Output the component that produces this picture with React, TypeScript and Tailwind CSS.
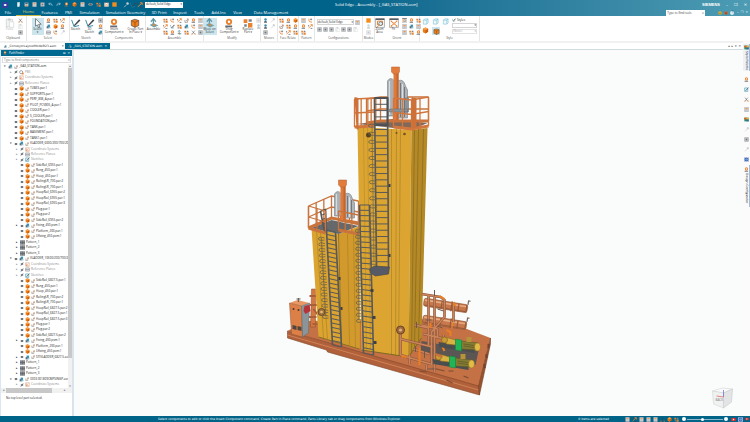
import React, { useState } from "react";

const ORANGE = "#e8822e";
const STEEL = "#41474f";
const TEAL = "#2f86a6";

type IconName =
  | "part" | "asm" | "eye" | "eyeOff" | "link" | "pattern" | "coord" | "plane" | "sketch" | "pmi"
  | "cursor" | "pencil" | "sheet" | "blocks" | "arrows" | "arc" | "scissors" | "fit" | "cube"
  | "cubeFull" | "zoom" | "gear" | "paste" | "undo" | "redo" | "save" | "corner" | "palette"
  | "globe" | "smile" | "frown" | "wrench" | "play" | "box" | "solid" | "move" | "person";

const glyphs: Record<IconName, React.ReactNode> = {
  part: (
    <>
      <path d="M8 1 14 4 14 11 8 15 2 12 2 4Z" fill="#ee7d18" />
      <path d="M8 7 14 4 14 11 8 15Z" fill="#c95f0b" />
      <path d="M8 1 14 4 8 7 2 4Z" fill="#f9a04a" />
    </>
  ),
  asm: (
    <>
      <path d="M5 2h8v8H5Z" fill="#3597b8" />
      <path d="M2 7h7v7H2Z" fill="#5c6e7a" />
      <path d="M8 9h6v5H8Z" fill="#8cc4d6" />
    </>
  ),
  eye: (
    <>
      <path d="M0 8Q8 -1 16 8Q8 17 0 8Z" fill="#a9aeb3" />
      <circle cx="8" cy="8" r="4" fill="#5a6066" />
    </>
  ),
  eyeOff: (
    <>
      <path d="M1 8Q8 0 15 8Q8 16 1 8Z" fill="#a4a9ae" />
      <circle cx="8" cy="8" r="3" fill="#666b70" />
      <path d="M3 15 13 1" stroke="#4a4f54" strokeWidth="2" />
    </>
  ),
  link: (
    <>
      <path d="M3 6v8h8V7" fill="none" stroke="#8a7d76" strokeWidth="2" />
      <path d="M6 10 13 3M9 3h5v5" fill="none" stroke="#ad7560" strokeWidth="2" />
    </>
  ),
  pattern: (
    <>
      <path d="M0 2h16v12H0Z" fill="#b7babd" />
      <path d="M0 3h16M0 8h16M0 13h16M3 2v12M8 2v12M13 2v12" stroke="#54595e" strokeWidth="2" />
    </>
  ),
  coord: (
    <>
      <path d="M2 2h12v12H2Z" fill="#fff" stroke="#d3a78b" strokeWidth="1.5" />
      <path d="M4 4v8h8M4 12 11 4" fill="none" stroke="#df6e31" strokeWidth="1.5" />
    </>
  ),
  plane: <path d="M2 3h12v10H2ZM2 8h12" fill="#eceef0" stroke="#868c92" strokeWidth="2" />,
  sketch: (
    <>
      <path d="M2 3h10v11H2Z" fill="#e9f5f8" stroke="#4aa5bd" strokeWidth="2" />
      <path d="M5 12 14 2" stroke="#505960" strokeWidth="2.5" />
    </>
  ),
  pmi: (
    <>
      <circle cx="7" cy="7" r="5" fill="#fff" stroke="#777" strokeWidth="2" />
      <path d="M9 9h6v5H9Z" fill={ORANGE} />
    </>
  ),
  cursor: <path d="M4 1 13 10H9L11 15 9 16 7 11 4 13Z" fill="#fff" stroke={STEEL} strokeWidth="1" />,
  pencil: (
    <>
      <path d="M1 3 5 14 13 12" fill="none" stroke={TEAL} strokeWidth="1.5" />
      <path d="M5 11 13 2 15 4 7 12 4 13Z" fill={STEEL} />
    </>
  ),
  sheet: (
    <>
      <path d="M2 1h12v14H2Z" fill="#eef0f1" stroke="#8a9096" strokeWidth="1.5" />
      <path d="M4 4h8v3H4Z" fill={ORANGE} />
      <path d="M4 9h8M4 12h8" stroke="#8a9096" strokeWidth="1.5" />
    </>
  ),
  blocks: (
    <>
      <path d="M1 2h6v6H1ZM8 8h7v7H8Z" fill={ORANGE} />
      <path d="M9 2h5v4H9ZM2 10h4v4H2Z" fill="#7b8187" />
    </>
  ),
  arrows: (
    <>
      <path d="M2 13 13 3M8 2h6v6" fill="none" stroke={ORANGE} strokeWidth="2.5" />
      <path d="M2 3v5M8 14h6" stroke={STEEL} strokeWidth="2" />
    </>
  ),
  arc: (
    <>
      <path d="M3 2v7Q4 14 13 13" fill="none" stroke={ORANGE} strokeWidth="2.5" />
      <path d="M7 2h6v5H7Z" fill="#868c92" />
    </>
  ),
  scissors: (
    <>
      <path d="M3 2 12 13M12 2 4 13" stroke={STEEL} strokeWidth="1.5" />
      <circle cx="3" cy="13" r="2" fill={ORANGE} />
      <circle cx="13" cy="13" r="2" fill={ORANGE} />
    </>
  ),
  fit: (
    <>
      <path d="M1 1h14v14H1Z" fill="#fff" stroke="#7c8288" strokeWidth="1" />
      <path d="M1 1h14v2H1Z" fill={STEEL} />
      <path d="M3 5 7 8M13 5 9 8M3 13 7 10M13 13 9 10M3 5h2M11 5h2M3 13h2M11 13h2" stroke={ORANGE} strokeWidth="1.6" />
      <path d="M6 7h4v4H6Z" fill="#f3a872" />
    </>
  ),
  cube: <path d="M3 5h8v9H3ZM3 5 6 2h8v9L11 14M11 5 14 2" fill="#eef8fb" stroke="#58aec7" strokeWidth="1" />,
  cubeFull: (
    <>
      <path d="M8 2 14 4V12L8 15 2 12V4Z" fill="#ed7f1c" stroke={STEEL} strokeWidth="1" />
      <path d="M2 4 8 7 14 4M8 7V15" fill="none" stroke="#8d4410" strokeWidth="1" />
    </>
  ),
  zoom: (
    <>
      <path d="M1 1h14v14H1Z" fill="#fff" stroke="#7c8288" strokeWidth="1" />
      <path d="M1 1h14v2H1Z" fill={STEEL} />
      <path d="M4 5h8v6H4Z" fill="none" stroke={ORANGE} strokeWidth="1.5" />
      <circle cx="9" cy="9" r="3" fill="#e6f1f5" stroke={STEEL} strokeWidth="1" />
      <path d="M7 11 3 15" stroke={ORANGE} strokeWidth="1.5" />
    </>
  ),
  gear: (
    <>
      <circle cx="8" cy="6" r="5" fill={ORANGE} />
      <circle cx="8" cy="6" r="2" fill="#fff" />
      <path d="M2 12h11v3H2Z" fill="#656b71" />
    </>
  ),
  paste: (
    <>
      <path d="M2 2h10v12H2Z" fill="#f2f3f3" stroke="#c4c7c9" strokeWidth="1" />
      <path d="M5 1h4v3H5Z" fill="#c4c7c9" />
      <path d="M7 6h7v9H7Z" fill="#fff" stroke="#cfd1d3" strokeWidth="1" />
    </>
  ),
  undo: <path d="M3 6h7Q14 7 13 12M6 2 2 6 6 10" fill="none" stroke="#cfe2ea" strokeWidth="2" />,
  redo: <path d="M13 6H6Q2 7 3 12M10 2 14 6 10 10" fill="none" stroke="#cfe2ea" strokeWidth="2" />,
  save: (
    <>
      <path d="M2 2h12v12H2Z" fill="#cbd7dd" />
      <path d="M4 2h8v5H4Z" fill="#52626b" />
      <path d="M5 10h6v4H5Z" fill={ORANGE} />
    </>
  ),
  corner: (
    <>
      <path d="M4 1h9l-2 14H4Z" fill="#f2f5f6" />
      <path d="M9 1 13 5H9Z" fill="#8ba6b2" />
    </>
  ),
  palette: (
    <>
      <path d="M1 2h14v12H1Z" fill="#2a9360" />
      <path d="M1 2h7v6H1Z" fill="#e85a2b" />
      <path d="M8 2h7v6H8Z" fill="#f3bb35" />
      <path d="M8 8h7v6H8Z" fill="#3569b4" />
    </>
  ),
  globe: (
    <>
      <path d="M0 1h16v14H0Z" fill="#a9b3e0" />
      <circle cx="8" cy="8" r="5.5" fill="#2a55ac" />
      <path d="M8 3Q12 7 8 13M3 8h10" fill="none" stroke="#9fd4ff" strokeWidth="1.5" />
    </>
  ),
  smile: (
    <>
      <circle cx="8" cy="8" r="7" fill="#efb429" />
      <path d="M4 9Q8 14 12 9M5 5v2M11 5v2" fill="none" stroke="#5b3e06" strokeWidth="1.5" />
    </>
  ),
  frown: (
    <>
      <circle cx="8" cy="8" r="7" fill="#d5602c" />
      <path d="M4 12Q8 7 12 12M5 5v2M11 5v2" fill="none" stroke="#571b06" strokeWidth="1.5" />
    </>
  ),
  wrench: <path d="M3 14 11 6M9 3 13 7 15 3 12 1Z" fill="#c6cacd" stroke="#c6cacd" strokeWidth="2" />,
  play: (
    <>
      <path d="M1 3h14v10H1Z" fill="#e32b2b" />
      <path d="M6 5 11 8 6 11Z" fill="#fff" />
    </>
  ),
  box: (
    <>
      <path d="M2 2h12v12H2Z" fill="#dedfe1" stroke="#7d8388" strokeWidth="1.5" />
      <path d="M5 5h6v6H5Z" fill="#6f767c" />
    </>
  ),
  solid: <path d="M1 1h14v14H1Z" fill="#f28c1c" />,
  move: (
    <>
      <path d="M7 1v9M3 6 7 1 11 6" fill="none" stroke="#5f97a7" strokeWidth="2" />
      <path d="M1 11 7 8 15 12 8 15Z" fill="#6aa7b8" />
      <circle cx="8" cy="11" r="2" fill={ORANGE} />
    </>
  ),
  person: (
    <>
      <circle cx="8" cy="5" r="4" fill="#3d8fae" />
      <path d="M3 15Q3 9 8 9T13 15Z" fill="#60676d" />
    </>
  ),
};

function Ico({ name, className = "size-[5px]" }: { name: IconName; className?: string }) {
  return (
    <svg viewBox="0 0 16 16" className={`shrink-0 ${className}`} aria-hidden="true">
      {glyphs[name]}
    </svg>
  );
}

/* ---------- title bar ---------- */

const quickAccess: IconName[] = ["corner", "save", "sheet", "box", "undo", "redo", "gear", "part", "sheet", "eye", "blocks", "fit", "solid"];
const menuTabs = [
  { label: "File", width: "w-[16px]" },
  { label: "Home", width: "w-[25px]" },
  { label: "Features", width: "w-[17px]" },
  { label: "PMI", width: "w-[21px]" },
  { label: "Simulation", width: "w-[21px]" },
  { label: "Simulation Geometry", width: "w-[51px]" },
  { label: "3D Print", width: "w-[16px]" },
  { label: "Inspect", width: "w-[26px]" },
  { label: "Tools", width: "w-[12px]" },
  { label: "Add-Ins", width: "w-[27px]" },
  { label: "View", width: "w-[11px]" },
  { label: "Data Management", width: "w-[46px]" },
];

function Header() {
  return (
    <header className="h-[16px] shrink-0 flex flex-col bg-linear-to-r from-[#00638a] from-45% to-[#4d9cb4] text-white">
      <div className="h-[9px] grid grid-cols-[1fr_80px_1fr] items-center">
        <div className="flex items-center pl-[2px]">
          <span className="flex size-[6px] items-center justify-center bg-[#3340a0] text-[4px] leading-none font-bold">▪</span>
          <div className="ml-[8px] flex items-center gap-[3px]">
            {quickAccess.map((name, i) => (
              <button key={i} aria-label={`Quick command ${i + 1}`} className="flex">
                <Ico name={name} />
              </button>
            ))}
          </div>
          <div className="ml-[6px] mr-[2px] flex items-center gap-[1px]">
            <Ico name="wrench" className="size-[6px]" />
            <Ico name="pencil" className="size-[6px]" />
            <Ico name="arrows" className="size-[6px]" />
          </div>
          <button className="flex h-[6px] w-[38px] items-center justify-between bg-white px-[1px] text-[3px] leading-none text-[#333]">
            default,Solid Edge <span>▾</span>
          </button>
        </div>
        <h1 className="text-center text-[4px] leading-none whitespace-nowrap">Solid Edge - Assembly - [_GAS_STATION.asm]</h1>
        <div className="flex items-center justify-end gap-[6px] pr-[3px] text-[4px] leading-none">
          <span className="font-['Liberation_Sans',sans-serif] font-bold">SIEMENS</span>
          <button aria-label="Minimize">–</button>
          <button aria-label="Restore">❐</button>
          <button aria-label="Close">✕</button>
        </div>
      </div>
      <div className="flex h-[7px] items-center justify-between">
        <nav className="flex items-center text-[4px] leading-none whitespace-nowrap">
          {menuTabs.map((tab) => (
            <button
              key={tab.label}
              className={`flex h-[7px] shrink-0 items-center justify-center ${tab.width} ${
                tab.label === "Home" ? "border-b border-[#c9b548] text-[#e6d35a]" : ""
              } ${tab.label === "Data Management" ? "ml-[5px]" : ""}`}
            >
              {tab.label}
            </button>
          ))}
        </nav>
        <div className="flex items-center gap-[2px] pr-[2px]">
          <label className="mr-[11px] flex h-[6px] w-[39px] items-center bg-white pr-[1px]">
            <input
              aria-label="Find tools"
              placeholder="Type to find tools"
              className="h-[5px] w-full min-w-0 px-[1px] text-[3px] leading-none placeholder:text-[#444]"
            />
            <span className="text-[4px] leading-none text-[#444]">⌕</span>
          </label>
          <Ico name="smile" className="size-[4px]" />
          <Ico name="frown" className="size-[4px]" />
          <span className="flex size-[4px] items-center justify-center rounded-full bg-[#dbe8ee] text-[3px] leading-none text-[#235]">?</span>
          <span className="flex gap-[2px] pl-[1px] text-[3px] leading-none">
            <span>–</span>
            <span>❐</span>
            <span>✕</span>
          </span>
        </div>
      </div>
    </header>
  );
}

/* ---------- ribbon ---------- */

function Group({ label, className, children }: { label: string; className: string; children: React.ReactNode }) {
  return (
    <section className={`flex h-full shrink-0 flex-col border-r border-[#e6e6e6] ${className}`}>
      <div className="flex flex-1 items-start justify-center gap-[2px] pt-[2px]">{children}</div>
      <div className="pb-[1px] text-center text-[3px] leading-[4px] text-[#555]">{label}</div>
    </section>
  );
}

function BigButton({ icon, lines, active, muted }: { icon: IconName; lines: string[]; active?: boolean; muted?: boolean }) {
  return (
    <button
      className={`flex h-[17px] shrink-0 flex-col items-center px-[1px] text-center text-[3px] leading-[3px] whitespace-nowrap ${
        active ? "bg-[#cce4ec]" : ""
      } ${muted ? "text-[#bbb]" : "text-[#333]"}`}
    >
      <Ico name={icon} className="size-[10px]" />
      {lines.map((line) => (
        <span key={line}>{line}</span>
      ))}
    </button>
  );
}

function IconGrid({ icons, cols = "grid-cols-3", muted = "" }: { icons: IconName[]; cols?: string; muted?: string }) {
  return (
    <div className={`grid shrink-0 gap-x-[2px] gap-y-[1px] ${cols} ${muted}`}>
      {icons.map((name, i) => (
        <Ico key={i} name={name} />
      ))}
    </div>
  );
}

function Ribbon() {
  return (
    <div className="flex h-[25px] shrink-0 overflow-hidden bg-white">
      <Group label="Clipboard" className="w-[27px]">
        <BigButton icon="paste" lines={["Paste"]} muted />
        <IconGrid cols="grid-cols-1" icons={["scissors", "paste", "box"]} />
      </Group>
      <Group label="Select" className="w-[43px]">
        <BigButton icon="cursor" lines={["Select", "▾"]} active />
        <IconGrid icons={["gear", "blocks", "arrows", "asm", "part", "gear", "plane", "arc", "wrench"]} />
      </Group>
      <Group label="Sketch" className="w-[33px]">
        <BigButton icon="pencil" lines={["Sketch"]} />
        <BigButton icon="pencil" lines={["3D", "Sketch"]} />
        <IconGrid cols="grid-cols-1" icons={["box", "gear", "asm"]} />
      </Group>
      <Group label="Components" className="w-[43px]">
        <BigButton icon="gear" lines={["Insert", "Component ▾"]} />
        <BigButton icon="cubeFull" lines={["Create Part", "In Place ▾"]} />
      </Group>
      <Group label="Assemble" className="w-[58px]">
        <BigButton icon="move" lines={["Assemble"]} />
        <IconGrid
          cols="grid-cols-6"
          icons={[
            "blocks", "arc", "arrows", "link", "gear", "sheet",
            "arrows", "pencil", "blocks", "asm", "arc", "sheet",
            "blocks", "gear", "move", "blocks", "scissors", "box",
          ]}
        />
      </Group>
      <Group label="Modify" className="w-[57px]">
        <BigButton icon="move" lines={["Move on", "Select"]} active />
        <BigButton icon="gear" lines={["Drag", "Component ▾"]} />
        <BigButton icon="blocks" lines={["Replace", "Part ▾"]} />
        <IconGrid cols="grid-cols-1" muted="opacity-40" icons={["box", "person"]} />
      </Group>
      <Group label="Motors" className="w-[17px]">
        <IconGrid cols="grid-cols-2" icons={["person", "wrench", "person", "wrench", "box"]} />
      </Group>
      <Group label="Face Relate" className="w-[21px]">
        <IconGrid icons={["blocks", "gear", "part", "link", "blocks", "gear", "arc", "arrows", "blocks"]} />
      </Group>
      <Group label="Pattern" className="w-[16px]">
        <IconGrid cols="grid-cols-2" icons={["sheet", "arc", "gear", "arrows", "blocks"]} />
      </Group>
      <Group label="Configurations" className="w-[48px]">
        <div className="flex flex-col gap-[2px] pt-[1px]">
          <div className="flex items-center gap-[1px]">
            <button className="flex h-[6px] w-[37px] items-center justify-between border border-[#d5d5d5] text-[3px] leading-none text-[#333]">
              default,Solid Edge <span>▾</span>
            </button>
            <Ico name="sheet" />
          </div>
          <div className="flex gap-[1px]">
            {(["box", "box", "box", "paste", "box", "box", "paste"] as IconName[]).map((name, i) => (
              <Ico key={i} name={name} />
            ))}
          </div>
        </div>
      </Group>
      <Group label="Modes" className="w-[12px]">
        <div className="flex flex-col gap-[1px]">
          <Ico name="solid" />
          <Ico name="person" className="size-[5px] opacity-30" />
          <Ico name="box" className="size-[5px] opacity-40" />
        </div>
      </Group>
      <Group label="Orient" className="w-[45px]">
        <BigButton icon="zoom" lines={["Zoom", "Area"]} />
        <BigButton icon="fit" lines={["Fit"]} />
        <IconGrid cols="grid-cols-3" icons={["zoom", "gear", "blocks", "sheet", "asm", "sheet", "sheet", "blocks", "gear"]} />
      </Group>
      <Group label="Style" className="w-[60px]">
        <div className="grid grid-cols-3 gap-[2px] pl-[2px]">
          <Ico name="cube" className="size-[7px]" />
          <Ico name="cube" className="size-[7px]" />
          <Ico name="cube" className="size-[7px]" />
          <Ico name="part" className="size-[7px]" />
          <span className="flex size-[8px] items-center justify-center bg-[#cce4ec]">
            <Ico name="cubeFull" className="size-[7px]" />
          </span>
        </div>
        <div className="flex flex-1 flex-col pr-[2px] text-[3px] leading-none text-[#333]">
          <span className="flex items-center gap-[1px]">
            <Ico name="pencil" className="size-[4px]" />
            Styles
          </span>
          <button aria-label="Face style" className="mt-[1px] h-[5px] border border-[#d5d5d5] text-right">▾</button>
          <button className="mt-[1px] flex h-[5px] items-center justify-between border border-[#e2e2e2] text-[#aaa]">
            (None) <span>▾</span>
          </button>
        </div>
      </Group>
    </div>
  );
}

/* ---------- path finder ---------- */

type Kind = "root" | "sub" | "part" | "asm" | "pattern" | "pmi" | "coord" | "plane" | "sketch";
type Row = [level: number, kind: Kind, label: string];

const ladderParts = (level: number, size: string): Row[] => [
  [level, "part", `SideRail_${size}.par:1`],
  [level, "part", "Rung_450.par:1"],
  [level, "part", "Hoop_450.par:1"],
  [level, "part", "RailingLR_700.par:2"],
  [level, "part", "RailingLR_700.par:1"],
  [level, "part", `HoopRail_${size}.par:2`],
  [level, "part", `HoopRail_${size}.par:1`],
  [level, "part", `HoopRail_${size}.par:3`],
  [level, "part", "Plug.par:1"],
  [level, "part", "Plug.par:2"],
  [level, "part", `SideRail_${size}.par:2`],
  [level, "asm", "Fixing_450.psm:1"],
  [level, "part", "Platform_200.par:1"],
  [level, "part", "Ufixing_450.psm:1"],
];

const patterns: Row[] = [
  [2, "pattern", "Pattern_1"],
  [2, "pattern", "Pattern_2"],
  [2, "pattern", "Pattern_3"],
];

const rows: Row[] = [
  [0, "root", "_GAS_STATION.asm"],
  [1, "pmi", "PMI"],
  [1, "coord", "Coordinate Systems"],
  [1, "plane", "Reference Planes"],
  [1, "part", "TUBES.par:1"],
  [1, "part", "SUPPORTS.par:1"],
  [1, "part", "PERF_808_A.par:1"],
  [1, "part", "PILOT_PCV805_A.par:1"],
  [1, "part", "COOLER.par:1"],
  [1, "part", "S_COOLER.par:1"],
  [1, "part", "FOUNDATION.par:1"],
  [1, "part", "TANK.par:1"],
  [1, "part", "BASEMENT.par:1"],
  [1, "part", "TANK1.par:1"],
  [1, "sub", "VLADDER_6000/200/700/20"],
  [2, "coord", "Coordinate Systems"],
  [2, "plane", "Reference Planes"],
  [2, "sketch", "Sketches"],
  ...ladderParts(2, "6955"),
  ...patterns,
  [1, "sub", "VLADDER_10500/200/700/2"],
  [2, "coord", "Coordinate Systems"],
  [2, "plane", "Reference Planes"],
  [2, "sketch", "Sketches"],
  ...ladderParts(2, "6827.5"),
  [2, "asm", "STIVLADDER_6827.5.as"],
  ...patterns,
  [1, "sub", "3303.001809CMPSINGP.asr"],
  [2, "coord", "Coordinate Systems"],
];

const indent = ["pl-[3px]", "pl-[9px]", "pl-[15px]"];

function TreeRow({ row }: { row: Row }) {
  const [level, kind, label] = row;
  const open = kind === "root" || kind === "sub";
  const muted = kind === "pmi" || kind === "coord" || kind === "plane" || kind === "sketch";
  const icon: IconName = open || kind === "asm" ? "asm" : (kind as IconName);

  return (
    <li
      className={`flex min-h-0 flex-1 items-center text-[3px] leading-none whitespace-nowrap ${indent[level]} ${
        muted ? "text-[#8c8c8c]" : "text-[#222]"
      }`}
    >
      <span className="w-[4px] shrink-0">{kind === "part" ? "" : open ? "▾" : "▸"}</span>
      {kind !== "pattern" && kind !== "root" && <Ico name={muted ? "eyeOff" : "eye"} className="mr-[1px] size-[4px]" />}
      <Ico name={icon} className="mr-[1px] size-[5px]" />
      {!muted && kind !== "pattern" && <Ico name="link" className="mr-[1px] size-[4px]" />}
      <span>{label}</span>
    </li>
  );
}

function PathFinder() {
  const [query, setQuery] = useState("");

  return (
    <aside className="flex w-[74px] shrink-0 flex-col border-r-2 border-l border-r-[#d9e3ea] border-l-[#d9e8f3] bg-white">
      <div className="flex h-[6px] shrink-0 items-center justify-between bg-[#006991] px-[2px] text-[3px] leading-none text-white">
        <span className="flex items-center gap-[2px]">
          <Ico name="gear" className="size-[4px]" />
          PathFinder
        </span>
        <span className="flex gap-[2px]">
          <button aria-label="Pin">⊟</button>
          <button aria-label="Close panel">✕</button>
        </span>
      </div>
      <label className="m-[1px] flex h-[6px] shrink-0 items-center border border-[#dedede]">
        <input
          aria-label="Find components"
          placeholder="Type to find components"
          value={query}
          onChange={(e) => setQuery(e.target.value)}
          className="h-[4px] w-full min-w-0 px-[1px] text-[3px] leading-none placeholder:text-[#777]"
        />
        <span className="text-[4px] leading-none text-[#777]">⌕</span>
      </label>
      <div className="flex min-h-0 flex-1">
        <ul className="flex min-w-0 flex-1 flex-col overflow-hidden">
          {rows.map((row, i) => (
            <TreeRow key={i} row={row} />
          ))}
        </ul>
        <div className="flex w-[4px] shrink-0 flex-col items-center bg-[#f1f1f1] text-[3px] leading-[4px] text-[#666]">
          <span>▴</span>
          <span className="w-full basis-[290px] bg-[#c8c8c8]"></span>
          <span className="mt-auto">▾</span>
        </div>
      </div>
      <div className="flex h-[5px] shrink-0 items-center bg-[#f1f1f1] text-[3px] leading-none text-[#666]">
        <span className="w-[5px] text-center">◂</span>
        <span className="h-full w-[46px] bg-[#c8c8c8]"></span>
        <span className="ml-auto w-[8px]">▸</span>
      </div>
      <p className="h-[23px] shrink-0 pt-[3px] pl-[5px] text-[3px] leading-[4px] text-[#222]">No top level part selected.</p>
    </aside>
  );
}

/* ---------- model ---------- */

type Pt = [number, number];

const lerp = (a: Pt, b: Pt, t: number): Pt => [a[0] + (b[0] - a[0]) * t, a[1] + (b[1] - a[1]) * t];

function Ladder({ left, right, steps }: { left: [Pt, Pt]; right: [Pt, Pt]; steps: number }) {
  let rungs = "";
  for (let i = 0; i <= steps; i++) {
    const a = lerp(left[0], left[1], i / steps);
    const b = lerp(right[0], right[1], i / steps);
    rungs += `M${a[0]} ${a[1]}L${b[0]} ${b[1]}`;
  }
  return (
    <g fill="none" stroke="#56585a">
      <path d={rungs} strokeWidth="1" />
      <path d={`M${left[0]}L${left[1]}M${right[0]}L${right[1]}`} strokeWidth="1.6" />
    </g>
  );
}

function Cage({ from, to, reach, hoops }: { from: Pt; to: Pt; reach: number; hoops: number }) {
  let d = "";
  for (let i = 0; i <= hoops; i++) {
    const [x, y] = lerp(from, to, i / hoops);
    d += `M${x} ${y}q${-reach} -2 ${-reach} 1q0 2 ${reach} 1`;
  }
  const x1 = from[0] - reach / 2;
  const x2 = to[0] - reach / 2;
  return (
    <g fill="none" stroke="#66604a" strokeWidth="0.8">
      <path d={d} />
      <path d={`M${x1} ${from[1]}L${x2} ${to[1]}`} strokeWidth="0.6" />
    </g>
  );
}

/* Railing running through the top points, with posts dropping to the deck. */
function Railing({ top, drop, posts, color = "#c9733d" }: { top: Pt[]; drop: number; posts: number; color?: string }) {
  const line = (dy: number) => "M" + top.map(([x, y]) => `${x} ${y + dy}`).join("L");
  let d = "";
  for (let s = 0; s < top.length - 1; s++) {
    for (let i = 0; i <= posts; i++) {
      const [x, y] = lerp(top[s], top[s + 1], i / posts);
      d += `M${x} ${y}v${drop}`;
    }
  }
  return (
    <g fill="none" stroke={color} strokeWidth="1.3">
      <path d={line(0) + line(drop / 2)} />
      <path d={line(drop)} strokeWidth="3" />
      <path d={d} />
    </g>
  );
}

function Stack({ x, y, h }: { x: number; y: number; h: number }) {
  return (
    <g>
      <path d={`M${x - 5} ${y + 14}q3 -5 7 0V${y + h - 4}h-7Z`} fill="#a9afb3" stroke="#747b80" strokeWidth="0.6" />
      <path d={`M${x - 3} ${y + 14}V${y + h - 5}`} stroke="#d7dbdd" strokeWidth="1.2" />
      <path d={`M${x + 5} ${y + h - 2}V${y + 14}q6 -3 8 5l2 4V${y + h - 2}Z`} fill="#aeb4b8" stroke="#747b80" strokeWidth="0.6" />
      <path d={`M${x + 8} ${y + 16}V${y + h - 3}M${x + 12} ${y + 20}V${y + h - 3}`} stroke="#6b7277" strokeWidth="0.9" />
      <path d={`M${x + 10} ${y + 17}V${y + h - 3}`} stroke="#dde0e2" strokeWidth="1" />
      <path d={`M${x + 1} ${y}h5v${h}h-5Z`} fill="#df7a3b" />
      <path d={`M${x + 4} ${y}h2v${h}h-2Z`} fill="#c26732" />
      <path d={`M${x - 1} ${y}h8v5l-2 2h-4l-2 -2Z`} fill="#e27c3d" stroke="#b4602f" strokeWidth="0.5" />
    </g>
  );
}

function HeatExchanger({ x, y }: { x: number; y: number }) {
  return (
    <g transform={`translate(${x} ${y}) rotate(9)`}>
      <rect x="0" y="0" width="44" height="8" rx="2" fill="#c7784c" stroke="#8d5637" strokeWidth="0.6" />
      <path d="M1 2h42" stroke="#e9ab80" strokeWidth="1.6" />
      <path d="M1 7h42" stroke="#96593a" strokeWidth="1" />
      <path d="M5 0v8M18 0v8M28 -1v10M35 0v8M43 0v8" stroke="#9a5834" strokeWidth="1.2" />
      <path d="M30 -1v10" stroke="#f28a28" strokeWidth="1" />
      <path d="M44 0v-4h2" fill="none" stroke="#786a60" strokeWidth="1.2" />
    </g>
  );
}

function Pump({ x, y }: { x: number; y: number }) {
  return (
    <g transform={`translate(${x} ${y})`}>
      <path d="M-10 3 26 9V14L-9 8Z" fill="#4b4e4e" />
      <path d="M-7 -2 0 -1 7 1V6L-2 5Z" fill="#d9b242" stroke="#8b6c1e" strokeWidth="0.6" />
      <circle cx="-4" cy="1" r="3" fill="#c89b35" stroke="#795c1b" strokeWidth="0.6" />
      <path d="M13 2 30 4V11L13 10Z" fill="#857c34" stroke="#5d5926" strokeWidth="0.6" />
      <path d="M15 5 29 7M15 7 29 9" stroke="#5c5827" strokeWidth="0.7" />
      <path d="M18 -2h5v5h-5Z" fill="#b7933b" />
      <ellipse cx="29" cy="8" rx="3" ry="4" fill="#e2bc46" stroke="#8e6e23" strokeWidth="0.5" />
      <path d="M7 0 13 1V12L7 11Z" fill="#21b457" stroke="#15873f" strokeWidth="0.5" />
    </g>
  );
}

const pipeRun =
  "M421 294 440 297 444 300V317L431 332V365M428 295V345M434 297V372M400 333V355L430 364M400 339 432 347M421 325 437 329V338M414 325 428 328M443 333V347M453 303V322M423 334 449 340M413 349 429 354M426 365V370M409 355V364";

function GasStation() {
  return (
    <svg viewBox="74 50 668 366" className="h-full w-full" role="img" aria-label="Gas station assembly">
      {/* skid */}
      <path d="M287 331 305 321 440 319 490 338 478 388Z" fill="#c47146" />
      <path d="M287 331 478 386 479 395 327 352 326 350 287 338Z" fill="#b0603a" stroke="#7e4529" strokeWidth="0.6" />
      <path d="M287 335 478 390" stroke="#d68b5c" strokeWidth="0.8" />
      <path d="M478 386 490 338V344L479 395Z" fill="#96532f" stroke="#6e3a23" strokeWidth="0.5" />
      <path d="M421 341 478 351 475 365 420 352Z" fill="#5b5553" />
      <path d="M432 368 444 371M448 371h5M463 376l5 2M452 383l-6 -3M419 371l7 1" stroke="#7d4c31" strokeWidth="1.2" />

      {/* control cabinet */}
      <path d="M311 289h4v38h-5Z" fill="#d5783f" stroke="#8b4d2b" strokeWidth="0.5" />
      <path d="M309 296h8M309 305h8M308 317h8M313 309l6 8v7h-7" fill="none" stroke="#a85f3a" strokeWidth="2" />
      <path d="M289 303 297 300 309 303 301 306Z" fill="#e99763" />
      <path d="M289 303 301 306 302 337 291 334Z" fill="#dd8048" stroke="#8c5334" strokeWidth="0.5" />
      <path d="M301 306 309 303 308 333 302 337Z" fill="#8a9499" stroke="#5e666a" strokeWidth="0.5" />
      <path d="M292 325l4 1v4l-4 -1ZM297 326l4 1v4l-4 -1Z" fill="#51463f" />
      <circle cx="293" cy="309" r="1" fill="#4a3a31" />
      <circle cx="298" cy="310" r="1" fill="#4a3a31" />
      <path d="M304 306 309 305 310 311 305 314 303 311Z" fill="#b5343a" />
      <path d="M298 302v-4M296 299h4" stroke="#68625e" strokeWidth="1.2" />

      {/* small tower */}
      <path d="M311 228 338 234 359 226V349L318 337Z" fill="#dba32f" />
      <path d="M338 234 359 228V349L341 344Z" fill="#d29a2c" />
      <path d="M318 337 359 349" stroke="#8a6f23" strokeWidth="1" />
      <path d="M316 230 323 338M320 232 327 340M347 234 349 345M353 234 355 347" stroke="#a57d24" strokeWidth="0.6" fill="none" />
      <path d="M338 234 341 344" stroke="#866a24" strokeWidth="0.8" />
      <path d="M311 228 331 220 358 226 338 234Z" fill="#66686a" />
      <Railing top={[[308, 206], [331, 196], [358, 201]]} drop={22} posts={3} />
      <Stack x={339} y={180} h={40} />
      <Ladder left={[[320, 211], [324, 232]]} right={[[325, 209], [326, 232]]} steps={5} />
      <Railing top={[[338, 211], [358, 215]]} drop={19} posts={3} />
      <Railing top={[[308, 206], [325, 211]]} drop={22} posts={2} />
      <Cage from={[324, 238]} to={[328, 316]} reach={6} hoops={14} />
      <Ladder left={[[326, 230], [332, 345]]} right={[[335, 232], [341, 347]]} steps={26} />
      <circle cx="321" cy="312" r="3.5" fill="#a2733a" stroke="#6c4a2a" strokeWidth="1" />
      <circle cx="321" cy="312" r="1.3" fill="#e4bd7f" />

      {/* main tower */}
      <path d="M357 127 411 130 408 357 361 350Z" fill="#dca531" />
      <path d="M411 130 427 128 421 338 408 357Z" fill="#b58a26" />
      <path d="M414 130 411 354M418 129 414 349M423 129 418 343" stroke="#8b6c22" strokeWidth="0.8" fill="none" />
      <path d="M391 129 391 355M400 129 398 356M396 129 395 356" stroke="#9f7c2b" strokeWidth="0.6" fill="none" />
      <path d="M363 128 366 350M367 128 370 350" stroke="#b48b2a" strokeWidth="0.6" fill="none" />
      <path d="M361 350 408 357 421 338" fill="none" stroke="#806820" strokeWidth="1" />
      <circle cx="368" cy="135" r="2.5" fill="#54401c" />
      <circle cx="396" cy="133" r="1" fill="#6d5320" />
      <circle cx="404" cy="134" r="1.3" fill="#6d5320" />

      <path d="M357 124 392 119 427 123 411 130Z" fill="#80695b" />
      <Railing top={[[366, 99], [380, 97], [428, 97]]} drop={24} posts={3} />
      <Stack x={392} y={67} h={53} />
      <path d="M389 109h18v3h-18ZM404 98h4v14h-4Z" fill="#8c9296" stroke="#62686c" strokeWidth="0.5" />
      <Railing top={[[354, 99], [374, 98]]} drop={28} posts={3} color="#d2763d" />
      <Railing top={[[393, 98], [411, 100], [428, 97]]} drop={29} posts={2} color="#d2763d" />
      <path d="M354 97 358 98V130L356 129ZM411 98h5v30h-5Z" fill="#ce7138" />

      <Ladder left={[[374, 98], [376, 268]]} right={[[387, 98], [388, 268]]} steps={27} />
      <path d="M374 98h13v27h-13" fill="none" stroke="#4d5154" strokeWidth="1.8" />
      <Cage from={[375, 125]} to={[377, 262]} reach={7} hoops={17} />
      <path d="M369 269 374 266 389 267 388 274 375 276 370 273Z" fill="#565a66" stroke="#3f434c" strokeWidth="0.6" />
      <Ladder left={[[359, 205], [363, 353]]} right={[[369, 205], [373, 355]]} steps={28} />
      <Cage from={[360, 230]} to={[361, 320]} reach={5} hoops={15} />
      <path d="M388 184h2v3h-2ZM388 254h2v3h-2ZM370 289h3v3h-3ZM372 316h3v3h-3ZM373 341h3v3h-3ZM338 277h2v3h-2ZM340 307h2v3h-2Z" fill="#3f4042" />

      {/* coolers and piping */}
      <HeatExchanger x={424} y={298} />
      <HeatExchanger x={423} y={315} />
      <g fill="none" strokeLinejoin="round">
        <path d={pipeRun} stroke="#85543a" strokeWidth="2.6" />
        <path d={pipeRun} stroke="#cc835a" strokeWidth="1.6" />
        <path d="M439 296 444 299M430 323V328M453 303 455 306M446 330 450 332V336M442 347 444 351M419 348V365M401 356 406 357" stroke="#ec7f20" strokeWidth="2" />
        <path d="M425 320h6M416 322v6M437 309l6 2M437 326l5 2M415 346v6M424 351v7M427 369h7M434 290v6" stroke="#6e584b" strokeWidth="1" />
      </g>
      <circle cx="400" cy="330" r="4" fill="#a2693c" stroke="#69452a" strokeWidth="1" />
      <circle cx="400" cy="330" r="1.6" fill="#dfb282" />
      <Pump x={448} y={339} />
      <Pump x={442} y={356} />
      <path d="M448 335 440 333M442 357 435 354" stroke="#c9713b" strokeWidth="2" />
      <path d="M487 344h2v4h-2ZM485 354h2v4h-2ZM483 364h2v4h-2Z" fill="#6e4330" />

      {/* view cube */}
      <g strokeLinejoin="round">
        <path d="M712 391 722 388 732 389 723 393Z" fill="#fafafa" stroke="#d1d3d4" strokeWidth="0.6" />
        <path d="M712 391 723 393V408L713 404Z" fill="#f0f1f1" stroke="#d1d3d4" strokeWidth="0.6" />
        <path d="M723 393 732 389 731 402 723 408Z" fill="#e2e4e5" stroke="#c7cacb" strokeWidth="0.6" />
        <path d="M723 397V390" stroke="#6f73d9" strokeWidth="0.8" />
        <path d="M723 397 716 396" stroke="#de6a62" strokeWidth="0.8" />
        <text x="715" y="401" fontSize="3" fill="#777">BACK</text>
      </g>
    </svg>
  );
}

/* ---------- document area ---------- */

function DocumentTabs() {
  return (
    <div className="flex h-[9px] shrink-0 items-end border-t-2 border-b border-t-[#f1f1f1] border-b-[#cfdce3] bg-white font-['DejaVu_Sans',sans-serif] text-[3px] leading-none whitespace-nowrap">
      <button className="flex h-[6px] w-[65px] items-center gap-[1px] pl-[4px] text-[#333]">
        <Ico name="asm" className="size-[3px]" />
        _ConveyorLayoutModelR23.asm
        <span className="ml-auto pr-[1px]">✕</span>
      </button>
      <button className="flex h-[6px] w-[45px] items-center gap-[1px] bg-[#006991] px-[3px] text-white">
        <Ico name="asm" className="size-[4px]" />
        _GAS_STATION.asm
        <span className="ml-auto">✕</span>
      </button>
      <div className="ml-auto flex h-[6px] items-center gap-[2px] pr-[2px] text-[#333]">
        <span>◂</span>
        <span>▸</span>
        <span>▾</span>
        <span>✕</span>
      </div>
    </div>
  );
}

const dockIcons: IconName[] = ["gear", "sketch", "scissors", "sheet", "palette", "wrench", "box", "wrench", "globe"];

function DockBar() {
  return (
    <aside className="flex w-[7px] shrink-0 flex-col items-center bg-[#fbfbfb] pt-[3px] font-['DejaVu_Sans',sans-serif] text-[3px] leading-none text-[#222]">
      <div className="flex h-[27px] w-full shrink-0 flex-col items-center gap-[1px] border-r border-[#a9bad8] bg-[#edf1f7] pt-[1px]">
        <Ico name="palette" />
        <span className="whitespace-nowrap [writing-mode:vertical-rl]">Style Palette</span>
      </div>
      <div className="flex flex-col gap-[5px] pt-[6px]">
        {dockIcons.map((name, i) => (
          <button key={i} aria-label={`Dock pane ${i + 1}`} className="flex">
            <Ico name={name} />
          </button>
        ))}
      </div>
      <div className="mt-[3px] flex h-[42px] w-full shrink-0 flex-col items-center gap-[1px] border-r border-[#a9bad8] pt-[2px]">
        <Ico name="gear" />
        <span className="whitespace-nowrap [writing-mode:vertical-rl]">Design Configurator</span>
      </div>
    </aside>
  );
}

const statusIcons: IconName[] = ["sheet", "arrows", "sheet", "sheet", "sheet", "scissors", "part", "blocks"];

function StatusBar() {
  return (
    <footer className="flex h-[6px] shrink-0 items-center bg-[#006488] pr-[1px] font-['DejaVu_Sans',sans-serif] text-[3px] leading-none whitespace-nowrap text-white">
      <p className="flex-1 pl-[158px]">
        Select components to edit or click the Insert Component command, Create Part In Place command, Parts Library tab or drag components from Windows Explorer.
      </p>
      <p className="mr-[16px]">0 items are selected</p>
      <div className="flex items-center gap-[2px]">
        {statusIcons.map((name, i) => (
          <Ico key={i} name={name} />
        ))}
      </div>
      <div className="ml-[3px] mr-[3px] flex items-center gap-[1px]">
        <span className="size-[4px] rounded-full bg-white"></span>
        <input
          type="range"
          aria-label="Zoom"
          defaultValue={42}
          className="h-[4px] w-[36px] appearance-none bg-transparent [&::-webkit-slider-runnable-track]:h-px [&::-webkit-slider-runnable-track]:bg-[#8fb9ca] [&::-webkit-slider-thumb]:-mt-px [&::-webkit-slider-thumb]:size-[3px] [&::-webkit-slider-thumb]:appearance-none [&::-webkit-slider-thumb]:rounded-full [&::-webkit-slider-thumb]:bg-white"
        />
        <span className="size-[4px] rounded-full bg-white"></span>
      </div>
      <div className="flex items-center gap-[2px]">
        <Ico name="play" />
        <Ico name="globe" />
        <Ico name="play" className="size-[4px]" />
      </div>
    </footer>
  );
}

export default function App() {
  return (
    <div className="flex h-screen flex-col overflow-hidden bg-white font-['Open_Sans','Noto_Sans','DejaVu_Sans',sans-serif]">
      <Header />
      <Ribbon />
      <div className="flex min-h-0 flex-1">
        <div className="flex min-w-0 flex-1 flex-col">
          <DocumentTabs />
          <div className="flex min-h-0 flex-1">
            <PathFinder />
            <main className="min-w-0 flex-1 bg-[#f9fcfb]">
              <GasStation />
            </main>
          </div>
        </div>
        <DockBar />
      </div>
      <StatusBar />
    </div>
  );
}
